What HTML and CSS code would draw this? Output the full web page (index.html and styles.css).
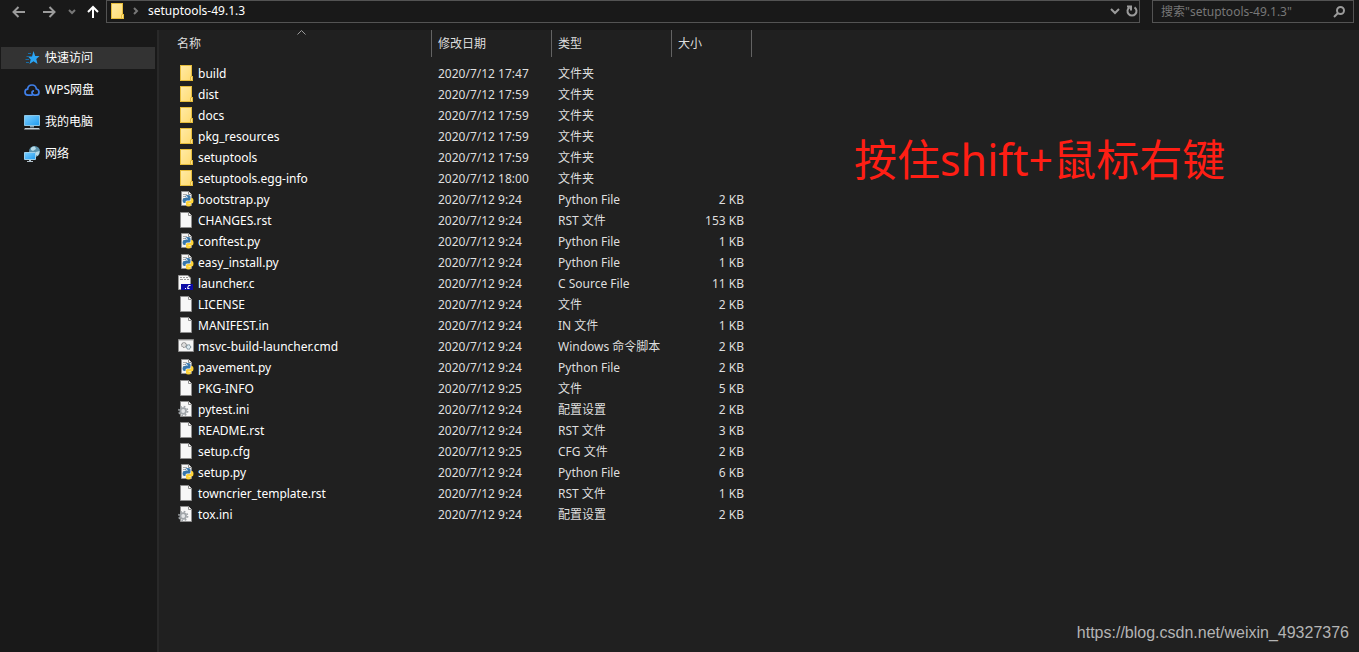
FILE: index.html
```
<!DOCTYPE html>
<html lang="zh-CN">
<head>
    <meta charset="UTF-8">
    <meta name="viewport" content="width=device-width, initial-scale=1.0">
    <title>setuptools-49.1.3</title>
    <link rel="stylesheet" href="styles.css">
</head>
<body>

    <!-- Icons -->
    <svg class="sprite" aria-hidden="true">
        <defs>
            <linearGradient id="screen-fill" x1="0" y1="0" x2="1" y2="1">
                <stop offset="0" stop-color="#7fd0ff"></stop>
                <stop offset="1" stop-color="#1e9bf0"></stop>
            </linearGradient>
            <linearGradient id="folder-fill" x1="0" y1="0" x2="1" y2="1">
                <stop offset="0" stop-color="#ffeaa4"></stop>
                <stop offset="1" stop-color="#ffdc74"></stop>
            </linearGradient>
        </defs>
        <symbol id="folder" viewBox="0 0 16 16">
            <path d="M2 0H14V11H15V16H2Z" fill="#e6bd3c"></path>
            <path d="M3 1H13V11L12 12V15H3Z" fill="url(#folder-fill)"></path>
            <path d="M13 12H14V15H13Z" fill="#ffe28a"></path>
        </symbol>
        <symbol id="file" viewBox="0 0 16 16">
            <path d="M2.500 .5H10.500L13.500 3.500V15.500H2.500Z" fill="#f7f7f7" stroke="#8f8f8f"></path>
            <path d="M10.500 .5V3.500H13.500" fill="#fff" stroke="#8f8f8f"></path>
        </symbol>
        <symbol id="python" viewBox="0 0 16 16">
            <path d="M3.500 .5H10.500L13.500 3.500V14.500H3.500Z" fill="#f4f4f4" stroke="#8f8f8f"></path>
            <path d="M5 3.500H9M5 5.500H8M5 7.500H7M5 9.500H6" stroke="#aaa"></path>
            <path d="M10.500 .5V3.500H13.500" fill="#fff" stroke="#8f8f8f"></path>
            <path d="M7.500 5Q7.500 4 10 4Q12.500 4 12.500 5.500V8Q12.500 9.500 11 9.500H9Q7.500 9.500 7.500 11V12H6.500Q4.500 12 4.500 9.500Q4.500 7 6.500 7H10V6.500H7.500Z" fill="#3776ab"></path>
            <path d="M13 7H13.700Q15.500 7 15.500 10Q15.500 12.500 13.500 12.500H10.500V13H13V14Q13 15.500 10.500 15.500Q8 15.500 8 14V11.500Q8 10 9.500 10H11.500Q13 10 13 8.500Z" fill="#ffd43b"></path>
            <circle cx="8.700" cy="5.400" r=".6" fill="#fff"></circle>
        </symbol>
        <symbol id="csource" viewBox="0 0 16 16">
            <path d="M.5 .5H10L12.500 3V14.500H.5Z" fill="#f7f7f7" stroke="#999"></path>
            <path d="M2 2.500H4M5 2.500H7M8 2.500H10M2 4.500H5M6 4.500H8M9 4.500H11" stroke="#999"></path>
            <path d="M3 9H15V15H3Z" fill="#0a0aa5"></path>
            <path d="M12.500 10.500H10.500L9.500 13.500H11.500M7 13.500H8" fill="none" stroke="#fff"></path>
        </symbol>
        <symbol id="cmd" viewBox="0 0 16 16">
            <path d="M.5 1.500H15.500V13.500H.5Z" fill="#f4f4f4" stroke="#8c8c8c"></path>
            <path d="M1 2.500H15" stroke="#ccc"></path>
            <circle cx="6" cy="7" r="2.400" fill="#ddd" stroke="#6c6c6c" stroke-dasharray="1.200 .4"></circle>
            <circle cx="10.500" cy="9" r="2.200" fill="#dbe8ef" stroke="#5f7784" stroke-dasharray="1.200 .4"></circle>
        </symbol>
        <symbol id="ini" viewBox="0 0 16 16">
            <path d="M2.500 .5H10.500L13.500 3.500V15.500H2.500Z" fill="#f7f7f7" stroke="#8f8f8f"></path>
            <path d="M10.500 .5V3.500H13.500" fill="#fff" stroke="#8f8f8f"></path>
            <circle cx="5.200" cy="10" r="4.400" fill="none" stroke="#a0a5a9" stroke-width="1.600" stroke-dasharray="1.700 1.755"></circle>
            <circle cx="5.200" cy="10" r="2.800" fill="#e4e6e8" stroke="#a0a5a9" stroke-width="1.800"></circle>
        </symbol>
        <symbol id="star" viewBox="0 0 16 16">
            <path d="M9.500 1L11.200 6H15.500L12.300 9L13.500 14L9.500 11.300L5.500 14L6.700 9.500L4 6.500H8Z" fill="#2aa5f5"></path>
            <path d="M4 3.500H7M2.500 6.500H5M1.500 9.500H5M2 12.500H5" stroke="#176da6"></path>
        </symbol>
        <symbol id="cloud" viewBox="0 0 16 16">
            <path d="M8.500 13.200H4Q1 13 1 10Q1 7.500 3.600 7.200Q4 3 8 3Q11.800 3 12.400 7Q15 7.500 15 10.200Q15 13.200 12 13.200H10.500Q8 12.500 8 10.500Q8 8.800 10 8.800" fill="none" stroke="#3f7fe8" stroke-width="1.700"></path>
        </symbol>
        <symbol id="computer" viewBox="0 0 16 16">
            <path d="M.5 1.500H15.500V11.500H.5Z" fill="url(#screen-fill)" stroke="#8cc6e6"></path>
            <path d="M6 12H10V13.500H6Z" fill="#8aa2b0"></path>
            <path d="M1 14H15L16 15.500H0Z" fill="#c3d0d8"></path>
        </symbol>
        <symbol id="network" viewBox="0 0 16 16">
            <circle cx="10.500" cy="5.500" r="5.500" fill="#5a91ac"></circle>
            <path d="M7 2Q9 0 11 .8L12 3L9 5L7 4ZM12 6L15.500 5Q15.500 8 13.500 10L12 9Z" fill="#b8dce9"></path>
            <path d="M.5 6.500H11.500V13.500H.5Z" fill="url(#screen-fill)" stroke="#9fd1ec"></path>
            <path d="M5 14H7V15H9V16H3V15H5Z" fill="#b5c3cc"></path>
        </symbol>
    </svg>

    <header class="toolbar">
        <nav class="nav-buttons">
            <button type="button" aria-label="后退"><svg width="14" height="12" viewBox="0 0 14 12"><path d="M13 6H2M6.500 1L1.500 6L6.500 11"></path></svg></button>
            <button type="button" aria-label="前进"><svg width="14" height="12" viewBox="0 0 14 12"><path d="M1 6H12M7.500 1L12.500 6L7.500 11"></path></svg></button>
            <button type="button" class="recent" aria-label="最近位置"><svg width="8" height="6" viewBox="0 0 8 6"><path d="M1 1L4 4L7 1"></path></svg></button>
            <button type="button" class="up" aria-label="向上"><svg width="12" height="14" viewBox="0 0 12 14"><path d="M6 13V2M1 7L6 2L11 7"></path></svg></button>
        </nav>
        <div class="address">
            <svg class="icon"><use href="#folder"></use></svg>
            <svg class="line-icon crumb" width="6" height="8" viewBox="0 0 6 8"><path d="M1 1L4 4L1 7"></path></svg>
            <a href="#">setuptools-49.1.3</a>
            <button type="button" class="drop" aria-label="历史记录"><svg width="10" height="8" viewBox="0 0 10 8"><path d="M1 2L5 6L9 2"></path></svg></button>
            <button type="button" aria-label="刷新"><svg width="12" height="12" viewBox="0 0 12 12"><path d="M8.500 2.300A4.500 4.500 0 1 1 3.500 2.300M1 1.500H5V5.500"></path></svg></button>
        </div>
        <form class="search">
            <input type="text" aria-label="搜索" placeholder='搜索"setuptools-49.1.3"'>
            <button type="button" aria-label="开始搜索"><svg width="12" height="12" viewBox="0 0 12 12"><circle cx="7.500" cy="4.500" r="3.500"></circle><path d="M5 7L1 11"></path></svg></button>
        </form>
    </header>

    <div class="window-body">
        <nav class="sidebar">
            <a href="#" class="active"><svg class="icon"><use href="#star"></use></svg>快速访问</a>
            <a href="#"><svg class="icon"><use href="#cloud"></use></svg>WPS网盘</a>
            <a href="#"><svg class="icon"><use href="#computer"></use></svg>我的电脑</a>
            <a href="#"><svg class="icon"><use href="#network"></use></svg>网络</a>
        </nav>

        <main class="content">
            <table class="files">
                <colgroup><col class="col-name"><col class="col-date"><col class="col-type"><col class="col-size"></colgroup>
                <thead>
                    <tr>
                        <th>名称<svg class="sort" width="9" height="5" viewBox="0 0 9 5"><path d="M.5 4.500L4.500 .5L8.500 4.500"></path></svg></th>
                        <th>修改日期</th>
                        <th>类型</th>
                        <th>大小</th>
                    </tr>
                </thead>
                <tbody>
                    <tr><td><svg class="icon"><use href="#folder"></use></svg>build</td><td>2020/7/12 17:47</td><td>文件夹</td><td></td></tr>
                    <tr><td><svg class="icon"><use href="#folder"></use></svg>dist</td><td>2020/7/12 17:59</td><td>文件夹</td><td></td></tr>
                    <tr><td><svg class="icon"><use href="#folder"></use></svg>docs</td><td>2020/7/12 17:59</td><td>文件夹</td><td></td></tr>
                    <tr><td><svg class="icon"><use href="#folder"></use></svg>pkg_resources</td><td>2020/7/12 17:59</td><td>文件夹</td><td></td></tr>
                    <tr><td><svg class="icon"><use href="#folder"></use></svg>setuptools</td><td>2020/7/12 17:59</td><td>文件夹</td><td></td></tr>
                    <tr><td><svg class="icon"><use href="#folder"></use></svg>setuptools.egg-info</td><td>2020/7/12 18:00</td><td>文件夹</td><td></td></tr>
                    <tr><td><svg class="icon"><use href="#python"></use></svg>bootstrap.py</td><td>2020/7/12 9:24</td><td>Python File</td><td>2 KB</td></tr>
                    <tr><td><svg class="icon"><use href="#file"></use></svg>CHANGES.rst</td><td>2020/7/12 9:24</td><td>RST 文件</td><td>153 KB</td></tr>
                    <tr><td><svg class="icon"><use href="#python"></use></svg>conftest.py</td><td>2020/7/12 9:24</td><td>Python File</td><td>1 KB</td></tr>
                    <tr><td><svg class="icon"><use href="#python"></use></svg>easy_install.py</td><td>2020/7/12 9:24</td><td>Python File</td><td>1 KB</td></tr>
                    <tr><td><svg class="icon"><use href="#csource"></use></svg>launcher.c</td><td>2020/7/12 9:24</td><td>C Source File</td><td>11 KB</td></tr>
                    <tr><td><svg class="icon"><use href="#file"></use></svg>LICENSE</td><td>2020/7/12 9:24</td><td>文件</td><td>2 KB</td></tr>
                    <tr><td><svg class="icon"><use href="#file"></use></svg>MANIFEST.in</td><td>2020/7/12 9:24</td><td>IN 文件</td><td>1 KB</td></tr>
                    <tr><td><svg class="icon"><use href="#cmd"></use></svg>msvc-build-launcher.cmd</td><td>2020/7/12 9:24</td><td>Windows 命令脚本</td><td>2 KB</td></tr>
                    <tr><td><svg class="icon"><use href="#python"></use></svg>pavement.py</td><td>2020/7/12 9:24</td><td>Python File</td><td>2 KB</td></tr>
                    <tr><td><svg class="icon"><use href="#file"></use></svg>PKG-INFO</td><td>2020/7/12 9:25</td><td>文件</td><td>5 KB</td></tr>
                    <tr><td><svg class="icon"><use href="#ini"></use></svg>pytest.ini</td><td>2020/7/12 9:24</td><td>配置设置</td><td>2 KB</td></tr>
                    <tr><td><svg class="icon"><use href="#file"></use></svg>README.rst</td><td>2020/7/12 9:24</td><td>RST 文件</td><td>3 KB</td></tr>
                    <tr><td><svg class="icon"><use href="#file"></use></svg>setup.cfg</td><td>2020/7/12 9:25</td><td>CFG 文件</td><td>2 KB</td></tr>
                    <tr><td><svg class="icon"><use href="#python"></use></svg>setup.py</td><td>2020/7/12 9:24</td><td>Python File</td><td>6 KB</td></tr>
                    <tr><td><svg class="icon"><use href="#file"></use></svg>towncrier_template.rst</td><td>2020/7/12 9:24</td><td>RST 文件</td><td>1 KB</td></tr>
                    <tr><td><svg class="icon"><use href="#ini"></use></svg>tox.ini</td><td>2020/7/12 9:24</td><td>配置设置</td><td>2 KB</td></tr>
                </tbody>
            </table>
            <p class="note">按住shift+鼠标右键</p>
            <p class="watermark">https://blog.csdn.net/weixin_49327376</p>
        </main>
    </div>

</body>
</html>
```
FILE: styles.css
```
:root {
    --bar-bg: #191919;
    --content-bg: #202020;
    --border: #535353;
    --text: #ffffff;
    --text-dim: #dedede;
    --icon-dim: #9b9b9b;
}

* {
    box-sizing: border-box;
}

body {
    display: flex;
    flex-direction: column;
    min-height: 100vh;
    margin: 0;
    background: var(--bar-bg);
    color: var(--text);
    font: 12px/20px "Noto Sans", "Noto Sans CJK SC", sans-serif;
}

a {
    color: inherit;
    text-decoration: none;
}

button {
    display: flex;
    align-items: center;
    justify-content: center;
    padding: 0;
    border: 0;
    background: none;
}

button svg,
.line-icon,
.sort {
    fill: none;
    stroke: var(--icon-dim);
    stroke-width: 2;
}

.sprite {
    position: absolute;
    width: 0;
    height: 0;
}

.icon {
    flex: none;
    width: 16px;
    height: 16px;
}

/* Toolbar */
.toolbar {
    display: flex;
    align-items: flex-start;
    height: 30px;
    padding-right: 5px;
}

.nav-buttons {
    display: flex;
    align-items: center;
    width: 106px;
    height: 24px;
    padding-left: 12px;
    gap: 16px;
}

.nav-buttons .recent {
    margin-left: -4px;
}

.nav-buttons .recent svg,
.address .crumb {
    stroke: #777;
}

.nav-buttons .up {
    margin-left: -5px;
}

.nav-buttons .up svg {
    stroke: var(--text);
}

.address {
    display: flex;
    flex: 1;
    align-items: center;
    height: 23px;
    margin-right: 12px;
    padding: 0 1px 1px 2px;
    border: 1px solid var(--border);
}

.address .crumb {
    margin: 0 9px 0 8px;
}

.address a {
    flex: 1;
}

.address .drop {
    margin-right: 6px;
}

.search {
    display: flex;
    align-items: center;
    width: 202px;
    height: 23px;
    padding: 0 8px;
    border: 1px solid var(--border);
}

.search input {
    flex: 1;
    min-width: 0;
    padding: 0;
    border: 0;
    outline: 0;
    background: none;
    color: var(--text);
    font: inherit;
}

.search input::placeholder {
    color: #777;
    opacity: 1;
}

/* Body */
.window-body {
    display: flex;
    flex: 1;
}

.sidebar {
    display: flex;
    flex-direction: column;
    gap: 10px;
    width: 159px;
    padding: 17px 2px 0 1px;
    border-right: 2px solid #292929;
}

.sidebar a {
    display: flex;
    align-items: center;
    gap: 5px;
    height: 22px;
    padding-left: 23px;
}

.sidebar .active {
    background: #333;
}

.content {
    position: relative;
    flex: 1;
    background: var(--content-bg);
}

/* File list */
.files {
    width: 593px;
    border-collapse: separate;
    border-spacing: 0;
    table-layout: fixed;
}

.col-name {
    width: 273px;
}

.col-date,
.col-type {
    width: 120px;
}

.col-size {
    width: 80px;
}

.files th {
    position: relative;
    height: 27px;
    padding: 0 6px;
    border-right: 1px solid #636363;
    color: var(--text-dim);
    font-weight: normal;
    text-align: left;
}

.files th:first-child {
    padding-left: 18px;
}

.sort {
    position: absolute;
    top: 0;
    right: 125px;
    stroke-width: 1;
}

.files tbody::before {
    content: '';
    display: block;
    height: 6px;
}

.files td {
    height: 21px;
    padding: 0 6px;
    color: var(--text-dim);
    white-space: nowrap;
}

.files td:first-child {
    padding-left: 19px;
    color: var(--text);
}

.files td:last-child {
    padding-right: 8px;
    text-align: right;
}

.files .icon {
    margin-right: 4px;
    vertical-align: -3px;
}

/* Text laid over the window */
.note {
    position: absolute;
    top: 100px;
    left: 695px;
    margin: 0;
    color: #ff1e14;
    font-size: 43px;
    line-height: 60px;
    white-space: nowrap;
}

.watermark {
    position: absolute;
    right: 10px;
    bottom: 9px;
    margin: 0;
    color: #b4b4b4;
    font-family: "Liberation Sans", sans-serif;
    font-size: 16px;
}
```
